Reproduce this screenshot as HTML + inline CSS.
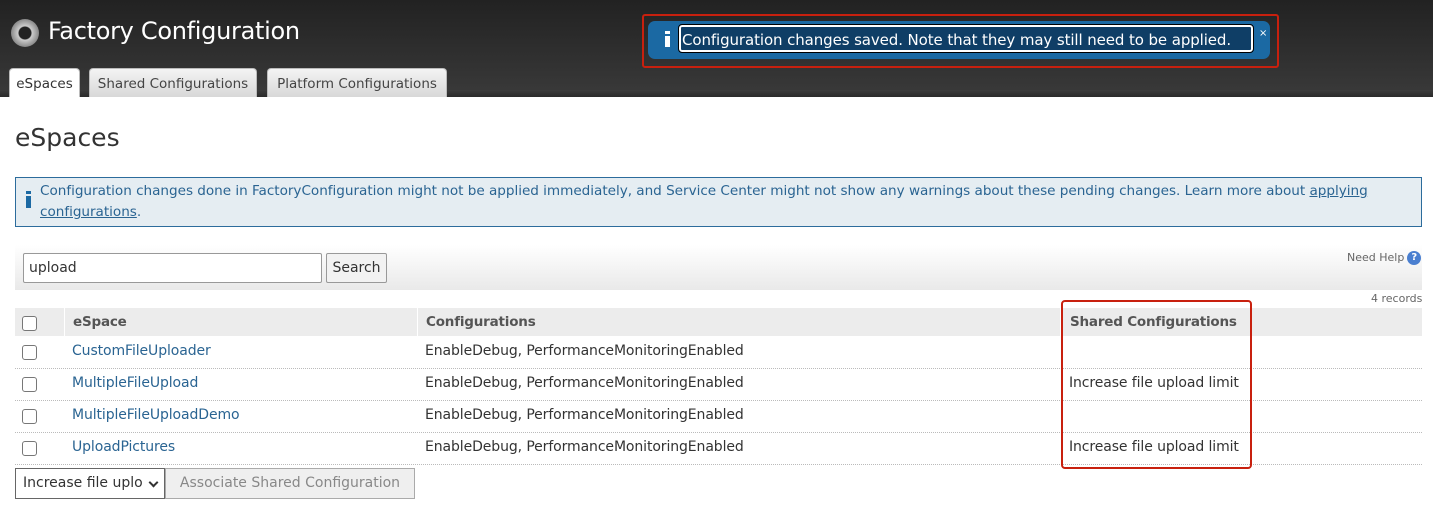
<!DOCTYPE html>
<html><head><style>
body{margin:0;width:1433px;height:508px;overflow:hidden;background:#fff;font-family:"DejaVu Sans","Liberation Sans",sans-serif;color:#333;position:relative}
.hdr{position:absolute;left:0;top:0;width:1433px;height:97px;background:linear-gradient(#222 0%,#303030 60%,#3a3a3a 100%)}
.hdr:after{content:"";position:absolute;left:0;right:0;top:90px;height:7px;background:linear-gradient(#3c3c3c,#2a2a2a)}
.logo{position:absolute;left:11px;top:19px;width:28px;height:28px;border-radius:50%;background:radial-gradient(circle at 50% 50%,#222 0 6px,#ccc 7px,#888 14px)}
.title{position:absolute;left:48px;top:17px;color:#fff;font-size:24px;font-family:"DejaVu Sans",sans-serif;letter-spacing:-0.3px}
.tab{position:absolute;top:68px;height:29px;background:linear-gradient(#f4f4f4,#d8d8d8);border-radius:4px 4px 0 0;font-size:13.5px;color:#444;line-height:30px;text-align:center;z-index:2;border:1px solid #bbb;border-bottom:none;box-sizing:border-box}
.tab.act{background:#fff;color:#333}
.toastwrap{position:absolute;left:642px;top:14px;width:637px;height:54px;border:2px solid #c8200e;border-radius:3px;box-sizing:border-box}
.toast{position:absolute;left:648px;top:21px;width:622px;height:38px;background:#1b69a3;border-radius:7px}
.toast .i{position:absolute;left:17px;top:10px;width:5px;height:3px;background:#fff}
.toast .i:before{content:"";position:absolute;left:0;top:5px;width:5px;height:11px;background:#fff}
.toast .t{position:absolute;left:31px;top:4px;width:574px;height:27px;border:2px solid #fff;outline:1px solid #000;border-radius:3px;background:#0f3e66;color:#fff;font-size:15px;letter-spacing:-0.1px;line-height:26px;padding-left:1px;white-space:nowrap;box-sizing:border-box;overflow:hidden}
.toast .x{position:absolute;left:611px;top:7px;color:#fff;font-size:10px}
h1{position:absolute;left:15px;top:123px;margin:0;font-weight:normal;font-size:25px;color:#333}
.info{position:absolute;left:15px;top:177px;width:1407px;height:50px;background:#e5edf2;border:1px solid #2c6c9c;box-sizing:border-box;font-size:13.6px;letter-spacing:-0.03px;color:#2a6492;line-height:21px;padding:3px 0 0 24px}
.info .i{position:absolute;left:10px;top:13px;width:5px;height:3px;background:#1b69a3}
.info .i:before{content:"";position:absolute;left:0;top:5px;width:5px;height:12px;background:#1b69a3}
.info a{color:#2a6492}
.sbar{position:absolute;left:15px;top:245px;width:1407px;height:45px;background:linear-gradient(#fff,#e9e9e9)}
.inp{position:absolute;left:23px;top:253px;width:299px;height:30px;border:1px solid #999;box-sizing:border-box;border-radius:2px;font-size:14px;line-height:28px;padding-left:5px;background:#fff}
.btn{position:absolute;left:326px;top:253px;width:61px;height:30px;border:1px solid #999;box-sizing:border-box;border-radius:2px;background:#f2f2f2;font-size:14px;line-height:28px;text-align:center}
.help{position:absolute;left:1347px;top:251px;font-size:11px;color:#666}
.help span{display:inline-block;width:14px;height:14px;border-radius:50%;background:#4a7fd0;color:#fff;font-size:10px;text-align:center;line-height:14px;vertical-align:middle;margin-left:3px;font-weight:bold}
.rec{position:absolute;left:1371px;top:292px;font-size:11px;color:#666}
.th{position:absolute;top:308px;height:28px;background:#ececec;font-weight:bold;font-size:13.5px;letter-spacing:-0.2px;color:#555;line-height:28px;box-sizing:border-box;padding-left:8px}
.row{position:absolute;left:15px;width:1407px;height:32px;border-bottom:1px dotted #bbb;font-size:14px;line-height:30px;letter-spacing:-0.1px}
.row div{position:absolute;top:0}
.cb{position:absolute;width:13px;height:13px;border:1px solid #777;border-radius:3px;background:#fff}
.lnk{color:#2a6492}
.hl{position:absolute;left:1061px;top:300px;width:191px;height:169px;border:2px solid #c8200e;border-radius:4px;box-sizing:border-box}
.sel{position:absolute;left:15px;top:468px;width:150px;height:31px;border:1px solid #666;box-sizing:border-box;font-size:14px;line-height:29px;padding-left:7px;background:#fff;overflow:hidden;white-space:nowrap}
.arr{position:absolute;left:150px;top:479px;width:5px;height:5px;border-right:2px solid #333;border-bottom:2px solid #333;transform:rotate(45deg)}
.arrbg{position:absolute;left:143px;top:470px;width:20px;height:27px;background:#fff}
.abtn{position:absolute;left:165px;top:468px;width:250px;height:31px;border:1px solid #aaa;box-sizing:border-box;background:#efefef;color:#888;font-size:14px;line-height:29px;text-align:center}
</style></head><body>
<div class="hdr"></div>
<div class="logo"></div>
<div class="title">Factory Configuration</div>
<div class="tab act" style="left:9px;width:71px">eSpaces</div>
<div class="tab" style="left:89px;width:168px">Shared Configurations</div>
<div class="tab" style="left:267px;width:180px">Platform Configurations</div>
<div class="toastwrap"></div>
<div class="toast"><div class="i"></div><div class="t">Configuration changes saved. Note that they may still need to be applied.</div><div class="x">×</div></div>
<h1>eSpaces</h1>
<div class="info"><div class="i"></div>Configuration changes done in FactoryConfiguration might not be applied immediately, and Service Center might not show any warnings about these pending changes. Learn more about <a href="#">applying</a><br><a href="#">configurations</a>.</div>
<div class="sbar"></div>
<div class="inp">upload</div>
<div class="btn">Search</div>
<div class="help">Need Help<span>?</span></div>
<div class="rec">4 records</div>
<div class="th" style="left:15px;width:49px"><span class="cb" style="left:7px;top:8px"></span></div>
<div class="th" style="left:65px;width:352px">eSpace</div>
<div class="th" style="left:418px;width:642px">Configurations</div>
<div class="th" style="left:1062px;width:360px">Shared Configurations</div>
<div class="row" style="top:336px"><span class="cb" style="left:7px;top:9px"></span><div class="lnk" style="left:57px">CustomFileUploader</div><div style="left:410px">EnableDebug, PerformanceMonitoringEnabled</div></div>
<div class="row" style="top:368px"><span class="cb" style="left:7px;top:9px"></span><div class="lnk" style="left:57px">MultipleFileUpload</div><div style="left:410px">EnableDebug, PerformanceMonitoringEnabled</div><div style="left:1054px">Increase file upload limit</div></div>
<div class="row" style="top:400px"><span class="cb" style="left:7px;top:9px"></span><div class="lnk" style="left:57px">MultipleFileUploadDemo</div><div style="left:410px">EnableDebug, PerformanceMonitoringEnabled</div></div>
<div class="row" style="top:432px"><span class="cb" style="left:7px;top:9px"></span><div class="lnk" style="left:57px">UploadPictures</div><div style="left:410px">EnableDebug, PerformanceMonitoringEnabled</div><div style="left:1054px">Increase file upload limit</div></div>
<div class="hl"></div>
<div class="sel">Increase file upload limit</div>
<div class="arrbg"></div><div class="arr"></div>
<div class="abtn">Associate Shared Configuration</div>
</body></html>
